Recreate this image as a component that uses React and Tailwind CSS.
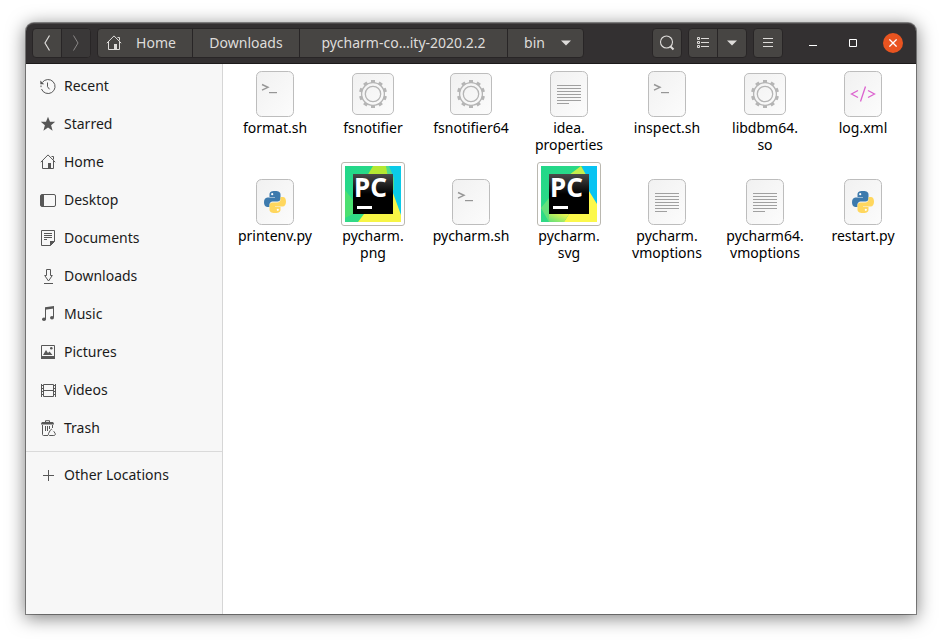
import clsx from 'clsx';

const places = [
    { name: 'Recent', icon: RecentIcon },
    { name: 'Starred', icon: StarIcon },
    { name: 'Home', icon: HomeIcon },
    { name: 'Desktop', icon: DesktopIcon },
    { name: 'Documents', icon: DocumentsIcon },
    { name: 'Downloads', icon: DownloadsIcon },
    { name: 'Music', icon: MusicIcon },
    { name: 'Pictures', icon: PicturesIcon },
    { name: 'Videos', icon: VideosIcon },
    { name: 'Trash', icon: TrashIcon },
];

// names carry their own line breaks, the view wraps after the dot
const rows = [
    {
        iconHeight: 'h-12',
        files: [
            { name: 'format.sh', icon: ScriptFile },
            { name: 'fsnotifier', icon: BinaryFile },
            { name: 'fsnotifier64', icon: BinaryFile },
            { name: 'idea.\nproperties', icon: TextFile },
            { name: 'inspect.sh', icon: ScriptFile },
            { name: 'libdbm64.\nso', icon: BinaryFile },
            { name: 'log.xml', icon: XmlFile },
        ],
    },
    {
        iconHeight: 'h-16',
        files: [
            { name: 'printenv.py', icon: PythonFile },
            { name: 'pycharm.\npng', icon: PngPreview },
            { name: 'pycharm.sh', icon: ScriptFile },
            { name: 'pycharm.\nsvg', icon: SvgPreview },
            { name: 'pycharm.\nvmoptions', icon: TextFile },
            { name: 'pycharm64.\nvmoptions', icon: TextFile },
            { name: 'restart.py', icon: PythonFile },
        ],
    },
];

/* ---------- symbolic icons, 16px ---------- */

function Symbol({ children }) {
    return (
        <svg viewBox="0 0 16 16" className="w-4 h-4 shrink-0" fill="none" stroke="currentColor" aria-hidden="true">
            {children}
        </svg>
    );
}

function RecentIcon() {
    return (
        <Symbol>
            <path d="M2.4 4.4A7 7 0 1 1 1.5 11" />
            <path d="M1 7.5v1.6" />
            <path d="M.3 2.6v3.6h3.9z" fill="currentColor" stroke="none" />
            <path d="M7.5 4.5v4.2l2 2.6" />
        </Symbol>
    );
}

function StarIcon() {
    return (
        <Symbol>
            <path d="M8 .8l2 5h5.2l-4.1 3.4 1.5 5.5L8 11.5l-4.6 3.2 1.5-5.5L.8 5.8H6z" fill="currentColor" stroke="none" />
        </Symbol>
    );
}

function HomeIcon() {
    return (
        <Symbol>
            <path d="M.8 8.2L8 .9l7.2 7.3" />
            <path d="M2.5 7v7.5h11V7" />
            <path d="M11.5 2.5h2v3" />
            <path d="M8 9h3v5.5H8z" fill="currentColor" stroke="none" />
        </Symbol>
    );
}

function DesktopIcon() {
    return (
        <Symbol>
            <rect x=".5" y="2.5" width="15" height="12" rx="1.5" />
            <path d="M1 3h3v11H1z" fill="currentColor" stroke="none" />
        </Symbol>
    );
}

function DocumentsIcon() {
    return (
        <Symbol>
            <path d="M10.5 15.5h-9V.5h13v11z" />
            <path d="M10 16v-5h5z" fill="currentColor" stroke="none" />
            <path d="M4 3.5h8M4 5.5h8M4 7.5h8M4 9.5h3" />
        </Symbol>
    );
}

function DownloadsIcon() {
    return (
        <Symbol>
            <path d="M6.5 1.5h4v6h1.8L8.5 13 4.7 7.5h1.8z" />
            <path d="M4 15.5h9" />
        </Symbol>
    );
}

function MusicIcon() {
    return (
        <Symbol>
            <path d="M5.5 13V3M13.5 11.5V1" />
            <path d="M5 1.2L14 0v2.6L5 3.8z" fill="currentColor" stroke="none" />
            <ellipse cx="4" cy="13.2" rx="2" ry="1.8" fill="currentColor" stroke="none" />
            <ellipse cx="12" cy="11.8" rx="2" ry="1.8" fill="currentColor" stroke="none" />
        </Symbol>
    );
}

function PicturesIcon() {
    return (
        <Symbol>
            <path d="M1.5 1.5h13v13h-13z" />
            <path d="M1 12h14v3H1zM3 11l3-5 2 3 1.500-1.500L12.500 11z" fill="currentColor" stroke="none" />
            <circle cx="11.3" cy="4.3" r="1.3" fill="currentColor" stroke="none" />
        </Symbol>
    );
}

function VideosIcon() {
    return (
        <Symbol>
            <path d="M3.5 2.5h10v12h-10zM3.5 8.5h10" />
            <path d="M1.5 2v13M15.5 2v13" />
            <path d="M1 3.5h2M1 6.5h2M1 9.5h2M1 12.5h2M14 3.5h2M14 6.5h2M14 9.5h2M14 12.5h2" />
        </Symbol>
    );
}

function TrashIcon() {
    return (
        <Symbol>
            <path d="M5.5 2V.7h4V2" />
            <path d="M1 4.5c0-2 1-2.5 2-2.5h9c1 0 2 .5 2 2.5z" fill="currentColor" stroke="none" />
            <path d="M2.500 5v9.500c0 .6.4 1 1 1H8M5.500 6v5M7.500 6v5M9.500 6v3M12.500 5v3" />
            <path d="M12.200 9.800c-.5-.6-1.200-.6-1.600 0l-2 3.500c-.5 1.100 0 2.200 1 2.200h4.200c1.200 0 1.900-1 1.400-2l-1.500-2.300" />
        </Symbol>
    );
}

function PlusIcon() {
    return (
        <Symbol>
            <path d="M8.5 3v11M3 8.5h11" />
        </Symbol>
    );
}

function ArrowDown() {
    return (
        <svg viewBox="0 0 10 6" className="w-[10px] h-[6px] shrink-0" fill="currentColor" aria-hidden="true">
            <path d="M0 .5h10L5 5.5z" />
        </svg>
    );
}

/* ---------- file icons ---------- */

function Page({ children, square }) {
    return (
        <svg viewBox="0 0 48 48" className="w-12 h-12" aria-hidden="true">
            <defs>
                <linearGradient id="paper" x1="0" y1="0" x2="1" y2="1">
                    <stop offset="0" stopColor="#f1f1f1" />
                    <stop offset="1" stopColor="#fcfcfc" />
                </linearGradient>
            </defs>
            {square
                ? <rect x="3.5" y="3.5" width="41" height="41" rx="4.5" fill="url(#paper)" stroke="#bdbdbd" />
                : <rect x="5.5" y="1.5" width="37" height="45" rx="5" fill="url(#paper)" stroke="#bdbdbd" />}
            {children}
        </svg>
    );
}

function ScriptFile() {
    return (
        <Page>
            <path d="M11 14.5l6 2.8-6 2.8" fill="none" stroke="#969696" strokeWidth="1.4" />
            <path d="M18 22.6h8" stroke="#969696" strokeWidth="1.2" />
        </Page>
    );
}

function TextFile() {
    return (
        <Page>
            <path d="M12 15.5h24M12 18.5h24M12 21.5h24M12 24.5h24M12 27.5h24M12 30.5h24M12 33.5h12" stroke="#a0a0a0" />
        </Page>
    );
}

function XmlFile() {
    return (
        <Page>
            <path d="M19 20.5L12.5 24l6.5 3.5M29 20.5l6.5 3.5-6.5 3.5M26.5 16.5l-5 15" fill="none" stroke="#dc62cf" strokeWidth="1.3" />
        </Page>
    );
}

function BinaryFile() {
    const teeth = [0, 36, 72, 108, 144, 180, 216, 252, 288, 324];
    return (
        <Page square>
            {teeth.map(a => (
                <rect key={a} x="22" y="10" width="4" height="3" fill="#b5b5b5" transform={`rotate(${a} 24 24)`} />
            ))}
            <circle cx="24" cy="24" r="11.4" fill="none" stroke="#b5b5b5" strokeWidth="1.3" />
            <circle cx="24" cy="24" r="7.7" fill="none" stroke="#b5b5b5" strokeWidth="1.3" />
        </Page>
    );
}

function PythonFile() {
    return (
        <Page>
            <path d="M24 13c-4.500 0-5.500 1.600-5.500 3.600V19H24v.5h-7.500c-2.500 0-3.500 2.200-3.500 4.800 0 2.600 1 4.700 3.200 4.700h2.300v-2.500c0-1.600 1.400-3 3-3h5c1.700 0 3-1.300 3-3v-4c0-2-1.500-3.500-5.500-3.500z" fill="#3d7aad" />
            <path d="M24 35c4.500 0 5.500-1.600 5.500-3.600V29H24v-.5h7.500c2.500 0 3.500-2.200 3.500-4.800 0-2.600-1-4.700-3.200-4.700h-2.300v2.500c0 1.600-1.400 3-3 3h-5c-1.700 0-3 1.300-3 3v4c0 2 1.500 3.500 5.500 3.500z" fill="#ffd75e" />
            <circle cx="21.200" cy="16.200" r="1.100" fill="#fff" />
            <circle cx="26.800" cy="31.800" r="1.100" fill="#fff" />
        </Page>
    );
}

function Preview({ children }) {
    return (
        <svg viewBox="0 0 64 64" className="w-16 h-16" aria-hidden="true">
            <defs>
                <linearGradient id="tile" x1="0" y1="0" x2="0" y2="1">
                    <stop offset="0" stopColor="#4a4a4a" />
                    <stop offset=".5" stopColor="#000" />
                </linearGradient>
                <linearGradient id="green" x1="0" y1="0" x2="1" y2="1">
                    <stop offset="0" stopColor="#21d789" />
                    <stop offset="1" stopColor="#3ddc84" />
                </linearGradient>
                <linearGradient id="lime" x1="0" y1="1" x2="1" y2="0">
                    <stop offset="0" stopColor="#5fe07a" />
                    <stop offset="1" stopColor="#fcf84a" />
                </linearGradient>
            </defs>
            <rect x=".5" y=".5" width="63" height="63" rx="2.5" fill="#fff" stroke="#bab8b0" />
            {children}
            <rect x="12" y="12" width="40" height="40" fill="url(#tile)" />
            <text x="13" y="35" fontSize="26" fontWeight="700" fill="#fff" fontFamily="'Noto Sans', sans-serif">PC</text>
            <rect x="16" y="44" width="15" height="3" fill="#fff" />
        </svg>
    );
}

function PngPreview() {
    return (
        <Preview>
            <path d="M4 4h56v56H4z" fill="url(#green)" />
            <path d="M48 4h12v52L48 24z" fill="#0bcbe8" />
            <path d="M32 4h13l5 10H26z" fill="#b5e832" />
            <path d="M45 4h3l5 12v12h-4z" fill="#4fdc8c" />
            <path d="M4 28l8 10v14l-8 4z" fill="#4be070" />
            <path d="M52 31l8 22v7H17l6-8h29z" fill="#f7f545" />
        </Preview>
    );
}

function SvgPreview() {
    return (
        <Preview>
            <path d="M4 4h56v56H4z" fill="url(#green)" />
            <path d="M45 4h15v40l-8-14z" fill="#07c3f2" />
            <path d="M32 13L44 4l8 14v12z" fill="#c6ee4c" />
            <path d="M12 36L4 46l8 14h16V50H12z" fill="#63e07c" />
            <path d="M52 29l8 13v18H27l5-8h20z" fill="#fcf84a" />
            <path d="M12 52h20l-5 8H12z" fill="url(#lime)" />
        </Preview>
    );
}

/* ---------- window parts ---------- */

function HeaderButton({ label, className, color = 'text-[#dedcda]', children }) {
    return (
        <button type="button" aria-label={label} className={clsx('flex h-7 items-center justify-center', color, className)}>
            {children}
        </button>
    );
}

const group = 'flex divide-x divide-[#282526] overflow-hidden rounded border border-[#282526] bg-[#474543]';

function HeaderBar() {
    return (
        <header className="flex h-[41px] items-center rounded-t-lg border-b border-[#1d1b1b] bg-[#333031] pl-[6px] pr-[3px] shadow-[inset_0_1px_0_#4d4a4b]">
            <div className={group}>
                <HeaderButton label="Back" className="w-[29px]">
                    <svg viewBox="0 0 8 16" className="w-2 h-4" fill="none" stroke="currentColor" strokeWidth="1.2">
                        <path d="M6.5 .5L2 8l4.5 7.5" />
                    </svg>
                </HeaderButton>
                <HeaderButton label="Forward" className="w-7 bg-[#3a3838]" color="text-[#8a8887]">
                    <svg viewBox="0 0 8 16" className="w-2 h-4" fill="none" stroke="currentColor">
                        <path d="M1.5 .5L6 8l-4.5 7.5" />
                    </svg>
                </HeaderButton>
            </div>

            <nav aria-label="Path" className={clsx(group, 'ml-[6px]')}>
                <HeaderButton className="w-[95px] gap-[14px] pr-2">
                    <HomeIcon />
                    <span>Home</span>
                </HeaderButton>
                <HeaderButton className="w-[107px]">Downloads</HeaderButton>
                <HeaderButton className="w-[208px]">pycharm-co…ity-2020.2.2</HeaderButton>
                <HeaderButton className="w-[75px] gap-4 pl-1">
                    <span>bin</span>
                    <ArrowDown />
                </HeaderButton>
            </nav>

            <div className={clsx(group, 'ml-auto')}>
                <HeaderButton label="Search" className="w-7">
                    <svg viewBox="0 0 16 16" className="w-4 h-4" fill="none" stroke="currentColor">
                        <circle cx="7.5" cy="7" r="6" strokeWidth="1.1" />
                        <path d="M11.5 11.5l3 3" strokeWidth="2" />
                    </svg>
                </HeaderButton>
            </div>
            <div className={clsx(group, 'ml-[6px]')}>
                <HeaderButton label="List view" className="w-[29px]">
                    <svg viewBox="0 0 14 12" className="w-[14px] h-3" fill="none" stroke="currentColor">
                        <path d="M1.5 .5h2v2h-2zM1.5 4.5h2v2h-2zM1.5 8.5h2v2h-2zM5 1.5h8M5 5.5h8M5 9.5h8" />
                    </svg>
                </HeaderButton>
                <HeaderButton label="View options" className="w-7">
                    <ArrowDown />
                </HeaderButton>
            </div>
            <div className={clsx(group, 'ml-[6px]')}>
                <HeaderButton label="Menu" className="w-7">
                    <svg viewBox="0 0 10 10" className="w-[10px] h-[10px]" fill="none" stroke="currentColor">
                        <path d="M0 .5h10M0 4.5h10M0 8.5h10" />
                    </svg>
                </HeaderButton>
            </div>

            <div className="ml-[10px] flex">
                <HeaderButton label="Minimize" className="w-10" color="text-white">
                    <svg viewBox="0 0 8 8" className="w-2 h-2" fill="none" stroke="currentColor">
                        <path d="M0 6.5h8" />
                    </svg>
                </HeaderButton>
                <HeaderButton label="Maximize" className="w-10" color="text-white">
                    <svg viewBox="0 0 8 8" className="w-2 h-2" fill="none" stroke="currentColor">
                        <path d="M.5 .5h7v7h-7z" />
                    </svg>
                </HeaderButton>
                <HeaderButton label="Close" className="w-10" color="text-white">
                    <span className="flex size-5 items-center justify-center rounded-full bg-[#e95420]">
                        <svg viewBox="0 0 8 8" className="w-2 h-2" fill="none" stroke="currentColor" strokeWidth="1.3">
                            <path d="M.4 .4l7.2 7.2M7.6 .4L.4 7.6" />
                        </svg>
                    </span>
                </HeaderButton>
            </div>
        </header>
    );
}

function Place({ name, icon: Icon }) {
    return (
        <a href="#" className="flex h-[38px] items-center gap-2 pl-[14px] text-[#1b1b1b]">
            <span className="text-[#575757]"><Icon /></span>
            {name}
        </a>
    );
}

function App() {
    return (
        <div className="flex min-h-screen bg-white px-[26px] pt-[23px] pb-[29px] font-['Noto_Sans',sans-serif] text-sm">
            <div className="flex flex-1 flex-col rounded-t-lg bg-white shadow-[0_0_0_1px_rgba(0,0,0,0.4),0_3px_18px_1px_rgba(0,0,0,0.5)]">
                <HeaderBar />
                <div className="flex flex-1">
                    <aside className="w-[197px] shrink-0 border-r border-[#d6d6d6] bg-[#f7f7f7] pt-[3px]">
                        {places.map(p => <Place key={p.name} {...p} />)}
                        <hr className="my-1 border-[#dadada]" />
                        <Place name="Other Locations" icon={PlusIcon} />
                    </aside>
                    <main className="flex flex-1 flex-col gap-[9px] pt-[6px] pl-[3px] pr-1">
                        {rows.map(row => (
                            <div key={row.iconHeight} className="grid grid-cols-7">
                                {row.files.map(({ name, icon: Icon }) => (
                                    <div key={name} className="flex flex-col items-center">
                                        <div className={clsx('flex items-end', row.iconHeight)}><Icon /></div>
                                        <span className="mt-px whitespace-pre-line text-center leading-[17px] text-black">{name}</span>
                                    </div>
                                ))}
                            </div>
                        ))}
                    </main>
                </div>
            </div>
        </div>
    );
}

export default App;
